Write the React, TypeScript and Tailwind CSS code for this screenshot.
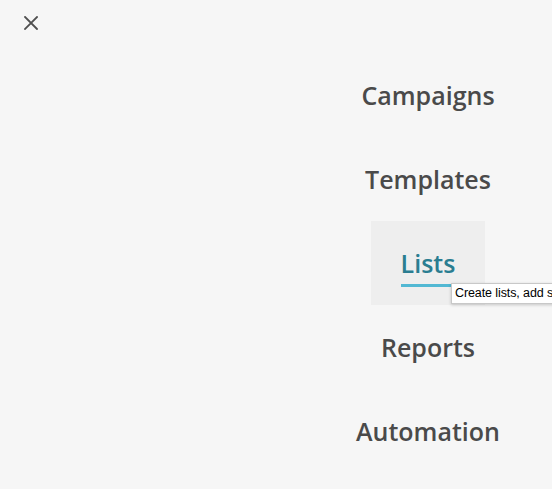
const items = ['Campaigns', 'Templates', 'Lists', 'Reports', 'Automation'];

export default function App() {
  return (
    <div className="relative min-h-[489px] w-full overflow-hidden bg-[#f6f6f6] font-['Open_Sans',sans-serif]">
      <div className="h-[53px] pl-[24px] pt-[16px]">
        <button aria-label="Close" className="block text-[#4f4f4f]">
          <svg width="14" height="14" viewBox="0 0 14 14" fill="none" stroke="currentColor" strokeWidth="1.8" strokeLinecap="square">
            <path d="M1 1L13 13M13 1L1 13" />
          </svg>
        </button>
      </div>
      <nav className="flex justify-end pr-[24px]">
        <ul className="flex w-[200px] flex-col items-center">
          {items.map((item) => {
            const active = item === 'Lists';
            return (
              <li key={item} className="flex h-[84px] items-center justify-center">
                <a
                  href="#"
                  className={
                    active
                      ? 'relative flex h-[84px] w-[114px] items-center justify-center bg-[#eeeeee] text-[25px] font-semibold leading-8 text-[#2a7d91]'
                      : 'flex h-[84px] items-center justify-center px-2 text-[25px] font-semibold leading-8 text-[#4a4a4a]'
                  }
                >
                  <span className="relative">
                    {item}
                    {active && <span className="absolute left-0 right-0 top-[calc(100%+5px)] h-[3px] bg-[#52b8d3]" />}
                  </span>
                  {active && (
                    <span className="absolute left-[80px] top-[62px] z-10 whitespace-nowrap border border-[#c8c8c8] bg-white px-[3px] py-[1px] font-['Liberation_Sans',sans-serif] text-[12.5px] font-normal leading-[17px] tracking-[-0.1px] text-black shadow-[0_1px_3px_rgba(0,0,0,0.2)]">
                      Create lists, add subscribers and manage segments
                    </span>
                  )}
                </a>
              </li>
            );
          })}
        </ul>
      </nav>
    </div>
  );
}
